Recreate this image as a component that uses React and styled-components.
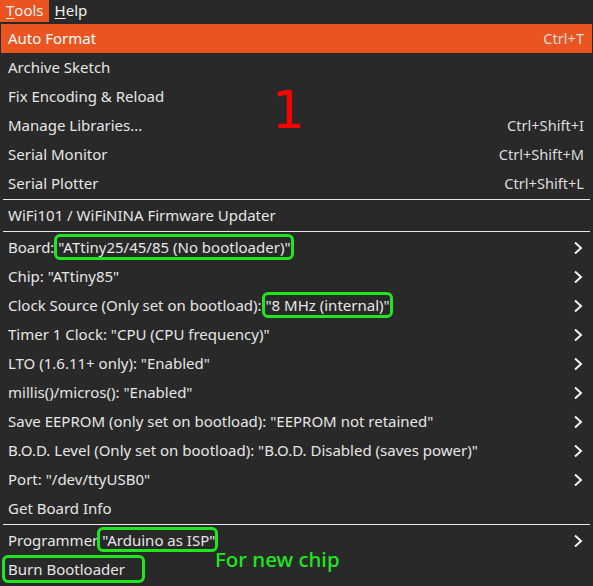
import styled, { createGlobalStyle } from "styled-components"

const GlobalStyle = createGlobalStyle`
  body {
    margin: 0;
    background: #292929;
    font-family: "Noto Sans", "Open Sans", sans-serif;
  }
`

const menu = [
  { label: "Auto Format", shortcut: "Ctrl+T", active: true },
  { label: "Archive Sketch" },
  { label: "Fix Encoding & Reload" },
  { label: "Manage Libraries...", shortcut: "Ctrl+Shift+I" },
  { label: "Serial Monitor", shortcut: "Ctrl+Shift+M" },
  { label: "Serial Plotter", shortcut: "Ctrl+Shift+L" },
  "sep",
  { label: "WiFi101 / WiFiNINA Firmware Updater" },
  "sep",
  { label: "Board:", value: '"ATtiny25/45/85 (No bootloader)"', mark: { l: 4, r: 3, t: 3, b: 3 }, sub: true },
  { label: 'Chip: "ATtiny85"', sub: true },
  { label: "Clock Source (Only set on bootload):", value: '"8 MHz (internal)"', mark: { l: 3, r: 3, t: 3, b: 3 }, sub: true },
  { label: 'Timer 1 Clock: "CPU (CPU frequency)"', sub: true },
  { label: 'LTO (1.6.11+ only): "Enabled"', sub: true },
  { label: 'millis()/micros(): "Enabled"', sub: true },
  { label: 'Save EEPROM (only set on bootload): "EEPROM not retained"', sub: true },
  { label: 'B.O.D. Level (Only set on bootload): "B.O.D. Disabled (saves power)"', sub: true },
  { label: 'Port: "/dev/ttyUSB0"', sub: true },
  { label: "Get Board Info" },
  "sep",
  { label: "Programmer", value: '"Arduino as ISP"', mark: { l: 5, r: 3, t: 3, b: 2 }, sub: true },
  { label: "", value: "Burn Bootloader", mark: { l: 6, r: 20, t: 4, b: 4 }, bare: true },
]

function Chevron() {
  return (
    <svg width="10" height="14" viewBox="0 0 10 14">
      <path d="M2 1.5 L8 7 L2 12.5" fill="none" stroke="#f2f2f2" strokeWidth="2" />
    </svg>
  )
}

export default function App() {
  return (
    <Frame>
      <GlobalStyle />
      <MenuBar>
        <MenuTitle active>
          <u>T</u>ools
        </MenuTitle>
        <MenuTitle>
          <u>H</u>elp
        </MenuTitle>
      </MenuBar>
      <Dropdown>
        {menu.map((item, i) =>
          item === "sep" ? (
            <Separator key={i} />
          ) : (
            <Item key={i} active={item.active}>
              <Label>
                {item.label}
                {item.value && (
                  <>
                    {item.bare ? "" : " "}
                    <Mark {...item.mark}>{item.value}</Mark>
                  </>
                )}
              </Label>
              {item.shortcut && <Shortcut>{item.shortcut}</Shortcut>}
              {item.sub && <Chevron />}
            </Item>
          )
        )}
      </Dropdown>
      <Number>1</Number>
      <Note>For new chip</Note>
    </Frame>
  )
}

const Frame = styled.div`
  position: relative;
  width: 593px;
  height: 586px;
  overflow: hidden;
  background: #292929;
  color: #e6e6e6;
`

const MenuBar = styled.div`
  display: flex;
  height: 23px;
  align-items: stretch;
`

const MenuTitle = styled.div`
  display: flex;
  align-items: center;
  padding: 0 5px 2px 6px;
  height: 20px;
  font-size: 15px;
  background: ${(p) => (p.active ? "#e95420" : "transparent")};
  color: #f0f0f0;
  u {
    text-decoration-thickness: 1px;
    text-underline-offset: 2px;
  }
`

const Dropdown = styled.div`
  display: flex;
  flex-direction: column;
  padding: 1px 1px 0 1px;
`

const Item = styled.div`
  display: flex;
  align-items: center;
  justify-content: space-between;
  height: 27px;
  padding: 0 9px 2px 7px;
  font-size: 15px;
  background: ${(p) => (p.active ? "#e95420" : "transparent")};
  color: ${(p) => (p.active ? "#ffffff" : "#e6e6e6")};
  white-space: nowrap;
  svg {
    margin-top: 2px;
  }
`

const Label = styled.span`
  line-height: 20px;
`

const Shortcut = styled.span`
  font-size: 14.6px;
  margin-right: -1px;
  color: #dcdcdc;
`

const Mark = styled.span`
  position: relative;
  display: inline-block;
  line-height: 20px;
  &::after {
    content: "";
    position: absolute;
    left: ${(p) => -p.l}px;
    right: ${(p) => -p.r}px;
    top: ${(p) => -p.t}px;
    bottom: ${(p) => -p.b}px;
    border: 3px solid #1fe61f;
    border-radius: 6px;
    pointer-events: none;
  }
`

const Separator = styled.div`
  height: 1px;
  margin: 1px 2px;
  background: #e8e8e8;
`

const Number = styled.div`
  position: absolute;
  left: 272px;
  top: 80px;
  font-family: "DejaVu Sans", sans-serif;
  font-size: 52px;
  line-height: 60px;
  color: #ff0000;
`

const Note = styled.div`
  position: absolute;
  left: 215px;
  top: 546px;
  font-size: 20.5px;
  font-weight: 500;
  line-height: 26px;
  color: #1fe61f;
`
